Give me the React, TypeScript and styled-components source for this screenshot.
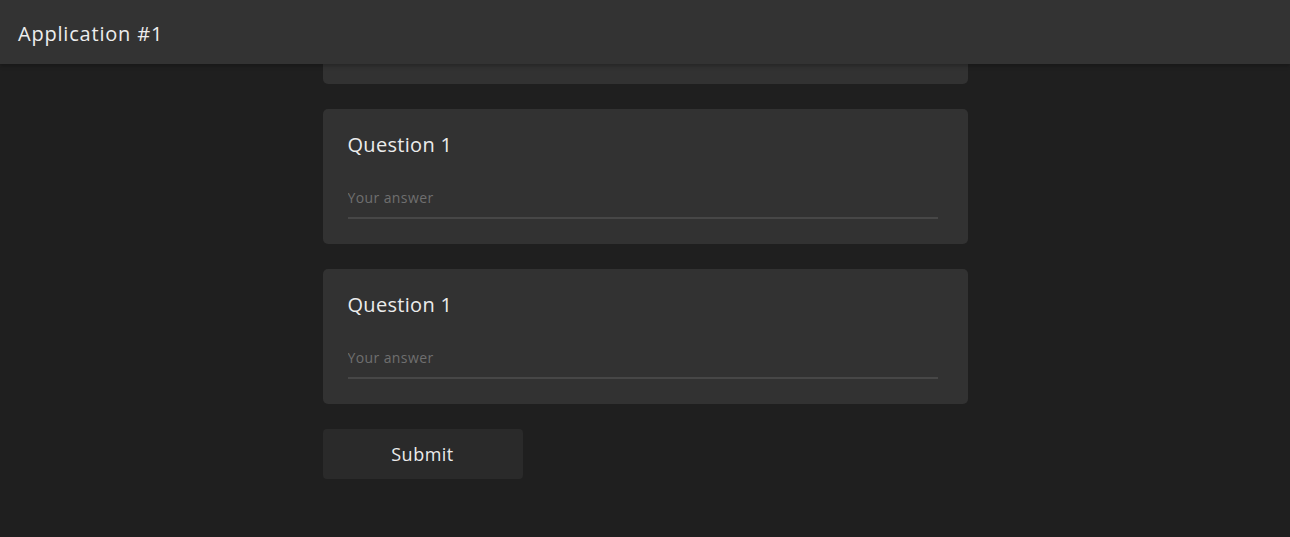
import React from 'react';
import styled, {createGlobalStyle} from 'styled-components';

const GlobalStyle = createGlobalStyle`
  html, body, #root {
    margin: 0;
    height: 100%;
  }

  body {
    background-color: #1f1f1f;
    font-family: "Open Sans", "Noto Sans", sans-serif;
    color: #ececec;
  }

  * {
    box-sizing: border-box;
  }
`;

const questions = ['Question 1', 'Question 1', 'Question 1'];

export default function App() {
    return (
        <>
            <GlobalStyle />
            <Page>
                <Header>
                    <HeaderTitle>Application #1</HeaderTitle>
                </Header>
                <Content>
                    <Form onSubmit={e => e.preventDefault()}>
                        {questions.map((q, i) => (
                            <QuestionCard key={i}>
                                <QuestionTitle>{q}</QuestionTitle>
                                <AnswerInput placeholder="Your answer" />
                            </QuestionCard>
                        ))}
                        <SubmitButton type="submit">Submit</SubmitButton>
                    </Form>
                </Content>
            </Page>
        </>
    );
}

const Page = styled.div`
  display: flex;
  flex-direction: column;
  height: 100vh;
  overflow: hidden;
`;

const Header = styled.header`
  position: relative;
  z-index: 2;
  flex: 0 0 64px;
  display: flex;
  align-items: center;
  padding: 4px 0 0 18px;
  background-color: #333333;
  box-shadow: 0 2px 4px rgba(0, 0, 0, 0.25);
`;

const HeaderTitle = styled.h1`
  margin: 0;
  font-size: 20px;
  font-weight: 400;
  line-height: 24px;
  color: #ededed;
  letter-spacing: 0.8px;
`;

const Content = styled.main`
  flex: 1;
  display: flex;
  flex-direction: column;
  justify-content: flex-end;
  overflow: hidden;
  padding-bottom: 58px;
`;

const Form = styled.form`
  display: flex;
  flex-direction: column;
  gap: 25px;
  width: 645px;
  margin: 0 auto;
`;

const QuestionCard = styled.div`
  display: flex;
  flex-direction: column;
  height: 135px;
  padding: 24px 30px 25px 25px;
  border-radius: 5px;
  background-color: #323232;
`;

const QuestionTitle = styled.div`
  font-size: 20px;
  line-height: 24px;
  margin-bottom: 24px;
  color: #ececec;
  letter-spacing: 0.3px;
`;

const AnswerInput = styled.input`
  width: 100%;
  height: 38px;
  padding: 0 0 4px 0;
  border: none;
  border-bottom: 2px solid #474747;
  background: transparent;
  font-family: inherit;
  font-size: 14px;
  color: #ececec;
  outline: none;
  letter-spacing: 0.4px;

  &::placeholder {
    color: #6f6f6f;
  }
`;

const SubmitButton = styled.button`
  width: 200px;
  height: 50px;
  border: none;
  border-radius: 4px;
  background-color: #2a2a2a;
  font-family: inherit;
  font-size: 18px;
  color: #ececec;
  cursor: pointer;
  letter-spacing: 0.5px;
`;
